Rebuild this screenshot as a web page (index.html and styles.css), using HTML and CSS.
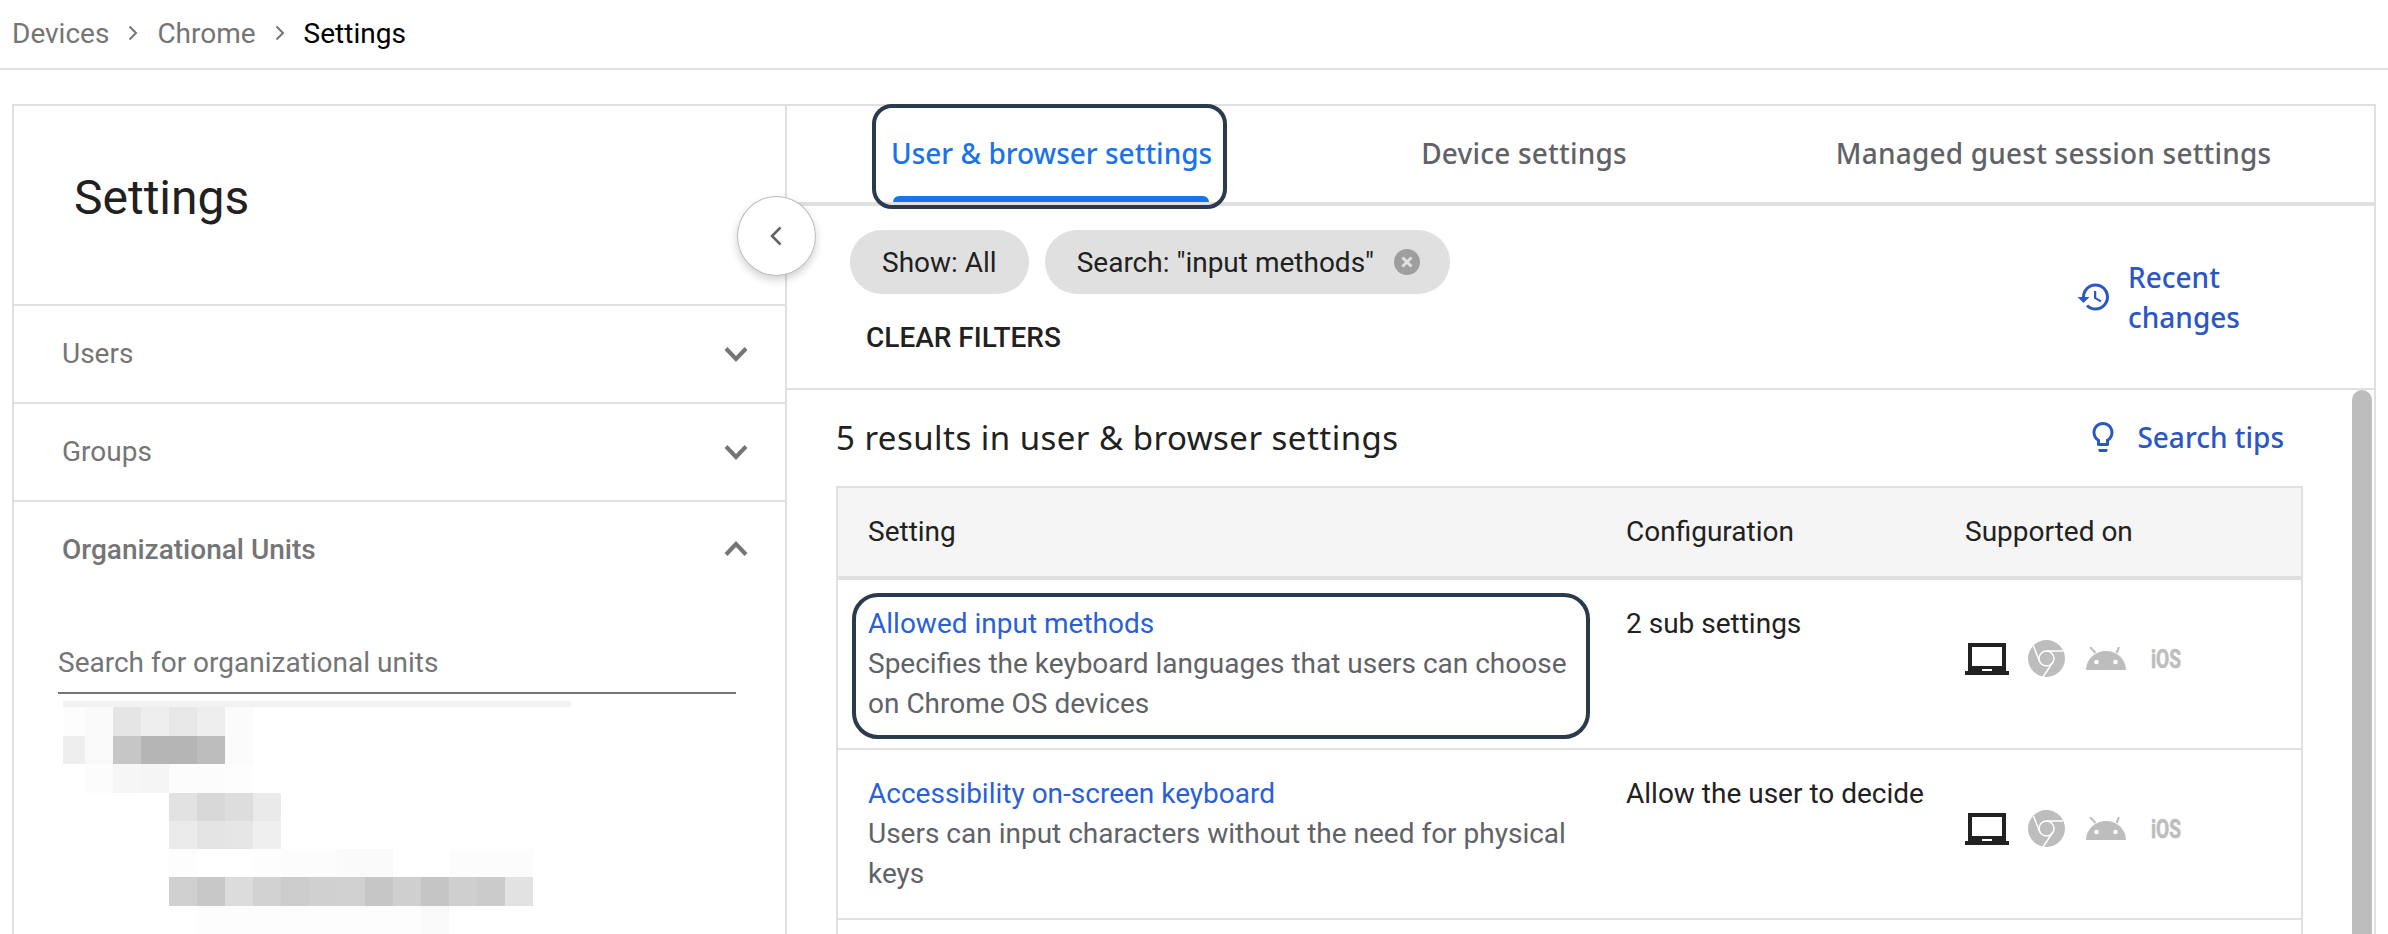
FILE: index.html
```html
<!DOCTYPE html>
<html lang="en">
<head>
<meta charset="utf-8">
<title>Settings</title>
<link rel="stylesheet" href="styles.css">
</head>
<body>
<header class="crumbs">
  <span class="crumb">Devices</span>
  <svg class="crumb-sep" viewBox="0 0 10 16"><path d="M1.5 1.5 8 8l-6.500 6.500"/></svg>
  <span class="crumb">Chrome</span>
  <svg class="crumb-sep" viewBox="0 0 10 16"><path d="M1.500 1.500 8 8l-6.500 6.500"/></svg>
  <span class="crumb crumb-current">Settings</span>
</header>

<div class="panel">
  <aside class="side">
    <div class="side-title"><h1>Settings</h1></div>
    <div class="acc-row"><span>Users</span><svg class="chev" viewBox="0 0 24 16"><path d="M2 2.500 12 13 22 2.500"/></svg></div>
    <div class="acc-row"><span>Groups</span><svg class="chev" viewBox="0 0 24 16"><path d="M2 2.500 12 13 22 2.500"/></svg></div>
    <div class="acc-open">
      <div class="acc-head"><span>Organizational Units</span><svg class="chev" viewBox="0 0 24 16"><path d="M2 13.500 12 3 22 13.500"/></svg></div>
      <div class="ou-search">Search for organizational units</div>
      <svg class="mosaic" width="510" height="233" viewBox="0 0 510 233" shape-rendering="crispEdges">
        <rect x="0" y="0" width="508" height="6" fill="#f2f2f2"/>
        <rect x="0" y="6" width="22" height="29" fill="#fdfdfd"/><rect x="22" y="6" width="28" height="29" fill="#fafafa"/><rect x="50" y="6" width="28" height="29" fill="#e5e5e5"/><rect x="78" y="6" width="28" height="29" fill="#eeeeee"/><rect x="106" y="6" width="28" height="29" fill="#e7e7e7"/><rect x="134" y="6" width="28" height="29" fill="#eeeeee"/><rect x="162" y="6" width="28" height="29" fill="#fbfbfb"/>
        <rect x="0" y="35" width="22" height="28" fill="#eeeeee"/><rect x="22" y="35" width="28" height="28" fill="#f9f9f9"/><rect x="50" y="35" width="28" height="28" fill="#c6c6c6"/><rect x="78" y="35" width="56" height="28" fill="#b5b5b5"/><rect x="134" y="35" width="28" height="28" fill="#bdbdbd"/><rect x="162" y="35" width="28" height="28" fill="#fbfbfb"/>
        <rect x="22" y="63" width="28" height="29" fill="#fcfcfc"/><rect x="50" y="63" width="28" height="29" fill="#f6f6f6"/><rect x="78" y="63" width="28" height="29" fill="#f5f5f5"/><rect x="106" y="63" width="56" height="29" fill="#fcfcfc"/><rect x="162" y="63" width="28" height="29" fill="#fdfdfd"/>
        <rect x="106" y="92" width="28" height="28" fill="#e2e2e2"/><rect x="134" y="92" width="28" height="28" fill="#d8d8d8"/><rect x="162" y="92" width="28" height="28" fill="#dddddd"/><rect x="190" y="92" width="28" height="28" fill="#eaeaea"/>
        <rect x="106" y="120" width="28" height="28" fill="#ebebeb"/><rect x="134" y="120" width="28" height="28" fill="#e4e4e4"/><rect x="162" y="120" width="28" height="28" fill="#e6e6e6"/><rect x="190" y="120" width="28" height="28" fill="#efefef"/>
        <rect x="106" y="148" width="28" height="28" fill="#fdfdfd"/><rect x="190" y="148" width="28" height="28" fill="#fdfdfd"/><rect x="218" y="148" width="56" height="28" fill="#fcfcfc"/><rect x="274" y="148" width="56" height="28" fill="#fafafa"/><rect x="386" y="148" width="84" height="28" fill="#fcfcfc"/>
        <rect x="106" y="176" width="28" height="29" fill="#d0d0d0"/><rect x="134" y="176" width="28" height="29" fill="#c8c8c8"/><rect x="162" y="176" width="28" height="29" fill="#dcdcdc"/><rect x="190" y="176" width="28" height="29" fill="#d2d2d2"/><rect x="218" y="176" width="28" height="29" fill="#cccccc"/><rect x="246" y="176" width="28" height="29" fill="#d0d0d0"/><rect x="274" y="176" width="28" height="29" fill="#d1d1d1"/><rect x="302" y="176" width="28" height="29" fill="#c6c6c6"/><rect x="330" y="176" width="28" height="29" fill="#cfcfcf"/><rect x="358" y="176" width="28" height="29" fill="#c5c5c5"/><rect x="386" y="176" width="28" height="29" fill="#cfcfcf"/><rect x="414" y="176" width="28" height="29" fill="#cbcbcb"/><rect x="442" y="176" width="28" height="29" fill="#e2e2e2"/>
        <rect x="134" y="205" width="224" height="28" fill="#fdfdfd"/><rect x="358" y="205" width="28" height="28" fill="#f9f9f9"/>
      </svg>
    </div>
  </aside>

  <main class="main">
    <nav class="tabs">
      <div class="tab tab-active"><span class="tab-label">User &amp; browser settings</span></div>
      <div class="tab"><span class="tab-label">Device settings</span></div>
      <div class="tab"><span class="tab-label">Managed guest session settings</span></div>
    </nav>

    <section class="filters">
      <div class="filter-left">
        <div class="chips">
          <span class="chip">Show: All</span>
          <span class="chip chip-search">Search: "input methods"
            <svg class="chip-x" viewBox="0 0 26 26"><circle cx="13" cy="13" r="13"/><path d="M8.500 8.500l9 9m0-9-9 9"/></svg>
          </span>
        </div>
        <div class="clear">CLEAR FILTERS</div>
      </div>
      <div class="recent">
        <svg class="recent-icon" viewBox="0 0 24 24"><path d="M13 3a9 9 0 0 0-9 9H1l3.890 3.890.07.14L9 12H6c0-3.870 3.130-7 7-7s7 3.130 7 7-3.130 7-7 7c-1.930 0-3.680-.79-4.940-2.060l-1.420 1.420A8.954 8.954 0 0 0 13 21a9 9 0 0 0 0-18zm-1 5v5l4.280 2.540.72-1.210-3.500-2.080V8H12z"/></svg>
        <span class="recent-text">Recent changes</span>
      </div>
    </section>

    <section class="results">
      <div class="results-scroll">
        <div class="results-head">
          <h2>5 results in user &amp; browser settings</h2>
          <div class="tips">
            <svg class="tips-icon" viewBox="0 0 24 24"><path d="M9 21c0 .55.45 1 1 1h4c.55 0 1-.45 1-1v-1H9v1zm3-19C8.140 2 5 5.140 5 9c0 2.380 1.190 4.470 3 5.740V17c0 .55.45 1 1 1h6c.55 0 1-.45 1-1v-2.260c1.810-1.270 3-3.360 3-5.740 0-3.860-3.140-7-7-7zm2.850 11.100l-.85.6V16h-4v-2.300l-.85-.6C7.800 12.160 7 10.630 7 9c0-2.760 2.240-5 5-5s5 2.240 5 5c0 1.630-.8 3.160-2.150 4.100z"/></svg>
            <span>Search tips</span>
          </div>
        </div>
        <table class="grid">
          <colgroup><col class="col-a"><col class="col-b"><col class="col-c"></colgroup>
          <thead>
            <tr><th>Setting</th><th>Configuration</th><th>Supported on</th></tr>
          </thead>
          <tbody>
            <tr>
              <td class="name-cell focused">
                <a class="set-link">Allowed input methods</a>
                <p class="set-desc">Specifies the keyboard languages that users can choose on Chrome OS devices</p>
              </td>
              <td class="conf">2 sub settings</td>
              <td>
                <div class="plats">
                  <svg class="p-laptop" viewBox="0 0 44 32"><path class="dark" d="M3 0h38v28h3v4H0v-4h3z"/><rect class="lite" x="7" y="4" width="30" height="19"/><rect class="lite" x="17" y="26" width="10" height="2"/></svg>
                  <svg class="p-chrome" viewBox="0 0 37 37"><circle class="grey" cx="18.500" cy="18.500" r="18.500"/><circle class="cut" cx="18.500" cy="18.500" r="7.500"/><path class="cut" d="M18.500 11H35M11.800 22 5.500 6M25 22 15 37"/></svg>
                  <svg class="p-android" viewBox="0 0 40 23"><path class="grey" d="M0 23a20 19 0 0 1 40 0z"/><path class="ant" d="M9.500 6 4 0M30.500 6 33 0"/><circle class="eye" cx="10.500" cy="15" r="2.300"/><circle class="eye" cx="29.500" cy="15" r="2.300"/></svg>
                  <svg class="p-ios" viewBox="0 0 30 18"><text x="0" y="18" textLength="30" lengthAdjust="spacingAndGlyphs">iOS</text></svg>
                </div>
              </td>
            </tr>
            <tr>
              <td class="name-cell">
                <a class="set-link">Accessibility on-screen keyboard</a>
                <p class="set-desc">Users can input characters without the need for physical keys</p>
              </td>
              <td class="conf">Allow the user to decide</td>
              <td>
                <div class="plats">
                  <svg class="p-laptop" viewBox="0 0 44 32"><path class="dark" d="M3 0h38v28h3v4H0v-4h3z"/><rect class="lite" x="7" y="4" width="30" height="19"/><rect class="lite" x="17" y="26" width="10" height="2"/></svg>
                  <svg class="p-chrome" viewBox="0 0 37 37"><circle class="grey" cx="18.500" cy="18.500" r="18.500"/><circle class="cut" cx="18.500" cy="18.500" r="7.500"/><path class="cut" d="M18.500 11H35M11.800 22 5.500 6M25 22 15 37"/></svg>
                  <svg class="p-android" viewBox="0 0 40 23"><path class="grey" d="M0 23a20 19 0 0 1 40 0z"/><path class="ant" d="M9.500 6 4 0M30.500 6 33 0"/><circle class="eye" cx="10.500" cy="15" r="2.300"/><circle class="eye" cx="29.500" cy="15" r="2.300"/></svg>
                  <svg class="p-ios" viewBox="0 0 30 18"><text x="0" y="18" textLength="30" lengthAdjust="spacingAndGlyphs">iOS</text></svg>
                </div>
              </td>
            </tr>
            <tr class="row-next"><td></td><td></td><td></td></tr>
          </tbody>
        </table>
      </div>
      <div class="scrollbar"><div class="thumb"></div></div>
    </section>
  </main>

  <button class="collapse" type="button" aria-label="Collapse">
    <svg viewBox="0 0 14 20"><path d="M11.500 1.500 3 10l8.500 8.500"/></svg>
  </button>
</div>
</body>
</html>
```

FILE: styles.css
```css
*, *::before, *::after { box-sizing: border-box; }

html, body {
  margin: 0;
  height: 934px;
  overflow: hidden;
  background: #fff;
}

body {
  display: flex;
  flex-direction: column;
  font-family: Roboto, "Liberation Sans", sans-serif;
  font-size: 28px;
  color: #212121;
}

/* Breadcrumb */
.crumbs {
  flex: none;
  height: 70px;
  padding: 0 0 2px 12px;
  display: flex;
  align-items: center;
  gap: 19px;
  border-bottom: 2px solid #e0e0e0;
}
.crumb { color: #757575; }
.crumb-current { color: #000; }
.crumb-sep {
  width: 10px;
  height: 16px;
  fill: none;
  stroke: #757575;
  stroke-width: 2;
}

/* Panel */
.panel {
  position: relative;
  flex: 1;
  min-height: 0;
  display: flex;
  margin: 34px 12px 0;
  border: 2px solid #e0e0e0;
  border-bottom: 0;
}

/* Sidebar */
.side {
  flex: none;
  width: 773px;
  border-right: 2px solid #e0e0e0;
  overflow: hidden;
}
.side-title {
  height: 200px;
  padding: 62px 0 0 60px;
  border-bottom: 2px solid #e0e0e0;
}
.side-title h1 {
  margin: 0;
  font-size: 48px;
  font-weight: 400;
  line-height: 60px;
  color: #212121;
}
.acc-row {
  height: 98px;
  padding: 0 37px 0 48px;
  display: flex;
  align-items: center;
  justify-content: space-between;
  border-bottom: 2px solid #e0e0e0;
  color: #757575;
}
.acc-row span { margin-bottom: 2px; }
.chev {
  width: 24px;
  height: 16px;
  fill: none;
  stroke: #757575;
  stroke-width: 4;
}
.acc-head {
  height: 94px;
  padding: 0 37px 0 48px;
  display: flex;
  align-items: center;
  justify-content: space-between;
  font-weight: 500;
  color: #757575;
}
.ou-search {
  height: 64px;
  margin: 34px 0 0 44px;
  width: 678px;
  padding-top: 3px;
  border-bottom: 2px solid #757575;
  line-height: 60px;
  color: #757575;
}
.mosaic {
  display: block;
  margin: 7px 0 0 49px;
}

/* Main column */
.main {
  flex: 1;
  min-width: 0;
  display: flex;
  flex-direction: column;
}

.tabs {
  flex: none;
  height: 100px;
  display: flex;
  overflow: visible;
  border-bottom: 4px solid #e0e0e0;
}
.tab {
  flex: none;
  display: flex;
  padding: 0 105px 0 104px;
  font-family: "Noto Sans", Roboto, sans-serif;
  font-size: 28px;
  font-weight: 500;
  letter-spacing: .2px;
  white-space: nowrap;
  color: #5f6368;
}
.tab-label {
  position: relative;
  display: flex;
  align-items: center;
  padding-bottom: 2px;
}
.tab-active {
  letter-spacing: 0;
  color: #1a73e8;
}
.tab-active .tab-label::before {
  content: "";
  position: absolute;
  inset: -2px -15px -7px -19px;
  border: 4px solid #2b3a4d;
  border-radius: 20px;
}
.tab-active .tab-label::after {
  content: "";
  position: absolute;
  left: 2px;
  right: 3px;
  bottom: 0;
  height: 6px;
  background: #1a73e8;
  border-radius: 6px 6px 0 0;
}

/* Filters */
.filters {
  flex: none;
  height: 184px;
  display: flex;
  justify-content: space-between;
  align-items: center;
  padding-right: 134px;
  border-bottom: 2px solid #e0e0e0;
}
.filter-left {
  align-self: flex-start;
  padding: 24px 0 0 63px;
}
.chips {
  display: flex;
  gap: 16px;
}
.chip {
  height: 64px;
  padding: 0 32px;
  display: flex;
  align-items: center;
  border-radius: 32px;
  background: #e0e0e0;
  color: #212121;
}
.chip-search { padding-right: 30px; }
.chip-x {
  width: 26px;
  height: 26px;
  margin-left: 20px;
}
.chip-x circle { fill: #9e9e9e; }
.chip-x path { fill: none; stroke: #e0e0e0; stroke-width: 3; }
.clear {
  margin: 24px 0 0 16px;
  font-weight: 500;
  line-height: 40px;
  color: #212121;
}
.recent {
  display: flex;
  align-items: center;
  gap: 16px;
  font-family: "Noto Sans", Roboto, sans-serif;
  font-size: 28px;
  font-weight: 500;
  line-height: 40px;
  color: #2a56c6;
}
.recent-icon {
  width: 36px;
  height: 36px;
  fill: #2a56c6;
}
.recent-text { width: 112px; }

/* Results */
.results {
  flex: 1;
  min-height: 0;
  display: flex;
  overflow: hidden;
}
.results-scroll {
  flex: 1;
  min-width: 0;
  padding: 0 51px 0 49px;
}
.results-head {
  height: 96px;
  padding: 0 17px 2px 0;
  display: flex;
  align-items: center;
  justify-content: space-between;
}
.results-head h2 {
  margin: 0;
  font-family: "Noto Sans", Roboto, sans-serif;
  font-size: 33px;
  font-weight: 400;
  letter-spacing: .47px;
  color: #212121;
}
.tips {
  display: flex;
  align-items: center;
  gap: 16px;
  font-family: "Noto Sans", Roboto, sans-serif;
  font-size: 28px;
  font-weight: 500;
  color: #2a56c6;
}
.tips-icon {
  width: 36px;
  height: 36px;
  fill: #2a56c6;
}
.scrollbar {
  flex: none;
  width: 22px;
  padding-right: 2px;
}
.thumb {
  height: 100%;
  background: #bdbdbd;
  border-radius: 10px 10px 0 0;
}

/* Table */
.grid {
  width: 1467px;
  table-layout: fixed;
  border-collapse: separate;
  border-spacing: 0;
  border: 2px solid #e0e0e0;
  border-bottom: 0;
}
.col-a { width: 758px; }
.col-b { width: 339px; }
.grid th {
  height: 92px;
  padding: 0 0 2px 30px;
  background: #f5f5f5;
  border-bottom: 4px solid #e0e0e0;
  text-align: left;
  font-weight: 400;
  color: #212121;
}
.grid td {
  height: 170px;
  padding: 24px 0 0 30px;
  vertical-align: top;
  border-bottom: 2px solid #e0e0e0;
  line-height: 40px;
}
.name-cell { position: relative; }
.focused::after {
  content: "";
  position: absolute;
  left: 14px;
  right: 6px;
  top: 13px;
  height: 146px;
  border: 4px solid #2b3a4d;
  border-radius: 26px;
}
.set-link {
  display: block;
  color: #2a5fd8;
}
.set-desc {
  margin: 0;
  padding-right: 28px;
  color: #5f6368;
}
.conf { color: #212121; }
.plats {
  display: flex;
  align-items: center;
  margin-top: 36px;
  height: 37px;
}
.p-laptop { width: 44px; height: 32px; }
.p-chrome { width: 37px; height: 37px; margin-left: 19px; }
.p-android { width: 40px; height: 23px; margin-left: 21px; }
.p-ios { width: 30px; height: 18px; margin-left: 25px; overflow: visible; }
.dark { fill: #212121; }
.lite { fill: #fff; }
.grey { fill: #bdbdbd; }
.cut { fill: none; stroke: #fff; stroke-width: 1.500; }
.ant { fill: none; stroke: #bdbdbd; stroke-width: 2; }
.eye { fill: #fff; }
.p-ios text {
  font-family: Roboto, sans-serif;
  font-size: 25px;
  font-weight: 700;
  fill: #bdbdbd;
  stroke: #bdbdbd;
  stroke-width: .6;
}
.row-next td { height: 100px; }

/* Collapse toggle */
.collapse {
  position: absolute;
  left: 723px;
  top: 90px;
  width: 79px;
  height: 80px;
  padding: 0 2px 0 0;
  display: flex;
  align-items: center;
  justify-content: center;
  background: #fff;
  border: 1.500px solid #bdbdbd;
  border-radius: 50%;
  box-shadow: 0 4px 8px rgba(0, 0, 0, .18);
}
.collapse svg {
  width: 14px;
  height: 20px;
  fill: none;
  stroke: #5f6368;
  stroke-width: 2.500;
}
```
